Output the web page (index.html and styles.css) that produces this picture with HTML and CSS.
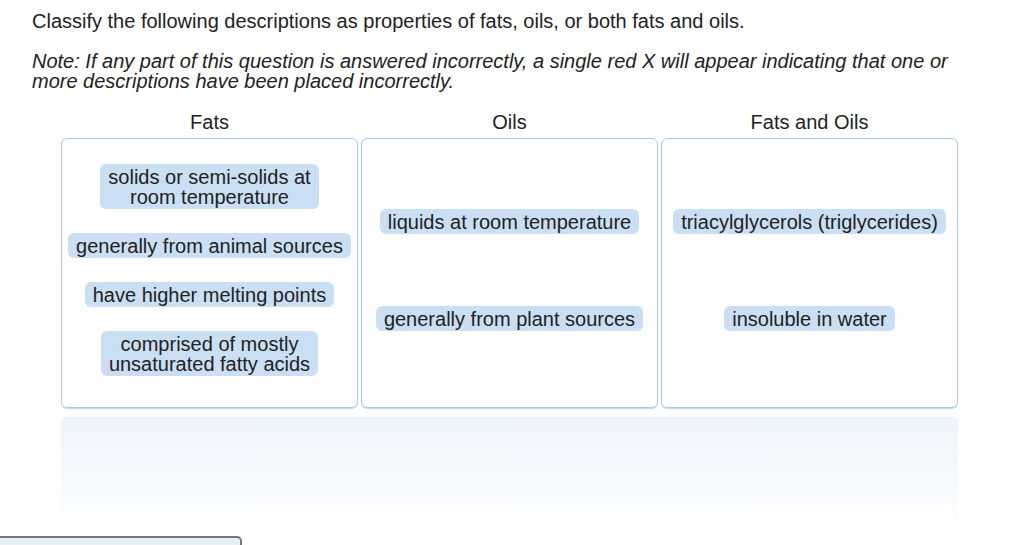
FILE: index.html
```html
<!DOCTYPE html>
<html lang="en">
<head>
<meta charset="utf-8">
<title>Classify fats and oils</title>
<link rel="stylesheet" href="styles.css">
</head>
<body>
  <div class="question">
    <p class="prompt">Classify the following descriptions as properties of fats, oils, or both fats and oils.</p>
    <p class="note">Note: If any part of this question is answered incorrectly, a single red X will appear indicating that one or more descriptions have been placed incorrectly.</p>

    <div class="sorter">
      <div class="bin-labels">
        <div>Fats</div>
        <div>Oils</div>
        <div>Fats and Oils</div>
      </div>
      <div class="bins">
        <div class="bin bin-dense">
          <span class="chip">solids or semi-solids at<br>room temperature</span>
          <span class="chip">generally from animal sources</span>
          <span class="chip">have higher melting points</span>
          <span class="chip">comprised of mostly<br>unsaturated fatty acids</span>
        </div>
        <div class="bin">
          <span class="chip">liquids at room temperature</span>
          <span class="chip">generally from plant sources</span>
        </div>
        <div class="bin">
          <span class="chip">triacylglycerols (triglycerides)</span>
          <span class="chip">insoluble in water</span>
        </div>
      </div>
      <div class="tray"></div>
    </div>
  </div>
  <div class="actions">
    <button class="submit" type="button"></button>
  </div>
</body>
</html>
```

FILE: styles.css
```css
html, body {
  margin: 0;
  padding: 0;
}

body {
  font-family: "Liberation Sans", Arial, sans-serif;
  font-size: 20px;
  line-height: 20px;
  color: #222;
  background: #fff;
  height: 545px;
  overflow: hidden;
}

.question {
  padding: 11px 0 0 32px;
  width: 932px;
}

.prompt {
  margin: 0;
}

.note {
  margin: 20px 0 0;
  font-style: italic;
}

.sorter {
  margin: 21px 0 0 29px;
  width: 897px;
}

.bin-labels {
  display: grid;
  grid-template-columns: repeat(3, 1fr);
  column-gap: 3px;
  text-align: center;
}

.bins {
  display: grid;
  grid-template-columns: repeat(3, 1fr);
  column-gap: 3px;
  margin-top: 6px;
  height: 270px;
}

.bin {
  border: 1px solid #a6c8ee;
  border-radius: 6px;
  box-shadow: 0 1px 0 #c2d9f2;
  display: flex;
  flex-direction: column;
  align-items: center;
  justify-content: center;
  gap: 72px;
  padding-bottom: 7px;
}

.bin-dense {
  gap: 24px;
}

.chip {
  background: #cbdff4;
  border-radius: 6px;
  padding: 3px 8px 2px;
  text-align: center;
  white-space: nowrap;
}

.tray {
  margin-top: 9px;
  height: 103px;
  border-radius: 5px;
  background: linear-gradient(#eef4fb, #fafcfe 85%, #fdfeff);
}

.actions {
  margin-top: 16px;
}

.submit {
  display: block;
  margin-left: -8px;
  width: 250px;
  height: 32px;
  border: 2px solid #767676;
  border-radius: 5px;
  background: #e7eef5;
  padding: 0;
}
```
